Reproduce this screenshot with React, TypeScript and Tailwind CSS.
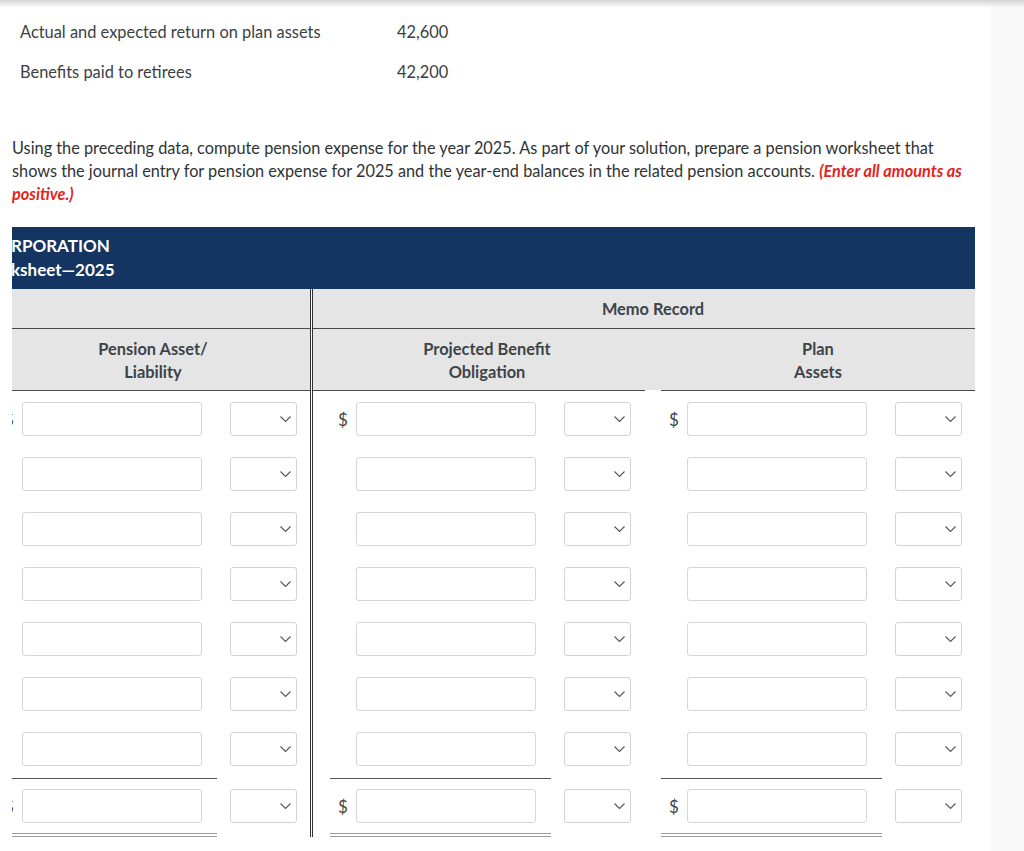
import React from "react";

const Chevron = () => (
  <svg width="11" height="6" viewBox="0 0 11 6" fill="none">
    <path d="M0.5 0.5 L5.5 5.5 L10.5 0.5" stroke="#555" strokeWidth="1.1" />
  </svg>
);

function SelectBox() {
  return (
    <div className="flex h-[34px] w-[67px] items-center justify-end rounded-[3px] border border-[#d3d3d3] bg-white pr-[5px]">
      <Chevron />
    </div>
  );
}

type Kind = "normal" | "sub" | "total";

function Row({ dollar, kind }: { dollar: boolean; kind: Kind }) {
  const cell1 =
    kind === "normal"
      ? "pt-[11px] pb-[10px]"
      : kind === "sub"
      ? "pt-[11px] pb-[12px] border-b border-[#555]"
      : "pt-[10px] pb-[10px] border-b-4 border-double border-[#9a9a9a]";
  const cell2 = kind === "total" ? "pt-[10px]" : "pt-[11px]";
  return (
    <div className="flex items-start">
      <div className={`flex w-[221px] items-center pl-[8px] ${cell1}`}>
        <span className="w-[18px] text-[17px] leading-none text-[#444]">{dollar ? "$" : ""}</span>
        <input
          readOnly
          className="h-[34px] w-[180px] rounded-[3px] border border-[#d6d6d6] bg-white outline-none"
        />
      </div>
      <div className={`pl-[13px] ${cell2}`}>
        <SelectBox />
      </div>
    </div>
  );
}

function Rows() {
  return (
    <div>
      <Row dollar kind="normal" />
      <Row dollar={false} kind="normal" />
      <Row dollar={false} kind="normal" />
      <Row dollar={false} kind="normal" />
      <Row dollar={false} kind="normal" />
      <Row dollar={false} kind="normal" />
      <Row dollar={false} kind="sub" />
      <Row dollar kind="total" />
    </div>
  );
}

export default function App() {
  return (
    <div className="relative flex min-h-[851px] font-[Lato,'Liberation_Sans',sans-serif] text-[#2f3336]">
      <div className="w-[991px] bg-white">
        <div className="pl-[20px] pt-[12px] text-[16.4px] text-[#3a3f44]">
          <div className="flex h-[40px] items-center">
            <span className="w-[377px]">Actual and expected return on plan assets</span>
            <span>42,600</span>
          </div>
          <div className="flex h-[40px] items-center">
            <span className="w-[377px]">Benefits paid to retirees</span>
            <span>42,200</span>
          </div>
        </div>
        <p className="ml-[12px] mr-[16px] mt-[44px] text-[16.3px] leading-[23px] text-[#2f3336]">
          Using the preceding data, compute pension expense for the year 2025. As part of your solution, prepare a pension
          worksheet that shows the journal entry for pension expense for 2025 and the year-end balances in the related
          pension accounts.{" "}
          <span className="font-bold italic text-[#e3241b]">(Enter all amounts as positive.)</span>
        </p>
        <div className="ml-[12px] mt-[22px] w-[963px] overflow-hidden">
          <div className="h-[62px] bg-[#143461] pt-[7px] text-[17px] font-bold leading-[24px] text-white">
            <div className="-ml-[1px]">RPORATION</div>
            <div className="-ml-[1px]">ksheet—2025</div>
          </div>
          <div className="-ml-[16px] flex w-[979px]">
            <div className="w-[314px]">
              <div className="h-[39px] bg-[#e5e5e5]" />
              <div className="h-[1px] bg-[#4a4a4a]" />
              <div className="flex h-[61px] items-center justify-center bg-[#e5e5e5] text-center text-[16.4px] font-bold leading-[23px] text-[#3d4449]">
                Pension Asset/
                <br />
                Liability
              </div>
              <div className="h-[1px] bg-[#4a4a4a]" />
              <Rows />
            </div>
            <div className="w-[3px] border-x border-[#333]" />
            <div className="w-[662px]">
              <div className="flex h-[39px] items-center justify-center bg-[#e5e5e5] pl-[18px] pt-[1px] text-[16.4px] font-bold text-[#3d4449]">
                Memo Record
              </div>
              <div className="h-[1px] bg-[#4a4a4a]" />
              <div className="flex bg-[#e5e5e5] text-center text-[16.4px] font-bold leading-[23px] text-[#3d4449]">
                <div className="flex h-[61px] w-[348px] items-center justify-center">
                  Projected Benefit
                  <br />
                  Obligation
                </div>
                <div className="flex h-[61px] w-[314px] items-center justify-center">
                  Plan
                  <br />
                  Assets
                </div>
              </div>
              <div className="flex h-[1px]">
                <div className="w-[332px] bg-[#4a4a4a]" />
                <div className="w-[16px] bg-white" />
                <div className="w-[314px] bg-[#4a4a4a]" />
              </div>
              <div className="flex">
                <div className="w-[348px] pl-[17px]">
                  <Rows />
                </div>
                <div className="w-[314px]">
                  <Rows />
                </div>
              </div>
            </div>
          </div>
        </div>
      </div>
      <div className="flex-1 bg-[#f9f9f9]" />
      <div className="pointer-events-none absolute inset-x-0 top-0 h-[8px] bg-linear-to-b from-[#d4d4d4] to-transparent" />
    </div>
  );
}
